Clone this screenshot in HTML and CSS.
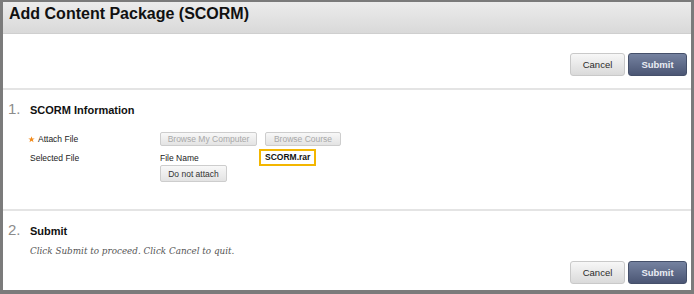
FILE: index.html
```html
<!DOCTYPE html>
<html lang="en">
  <head>
    <meta charset="UTF-8" />
    <title>Add Content Package (SCORM)</title>
    <link rel="stylesheet" href="styles.css">
  </head>
  <body>
    <div class="frame">
      <div class="page-header">
        <h1>Add Content Package (SCORM)</h1>
      </div>

      <div class="action-bar">
        <button type="button" class="btn btn-cancel">Cancel</button>
        <button type="submit" class="btn btn-submit">Submit</button>
      </div>

      <div class="step step-info">
        <h2 class="step-title"><span class="step-num">1.</span>SCORM Information</h2>

        <div class="field-row row-attach">
          <div class="field-label">
            <svg class="req" viewBox="0 0 10 10" width="7" height="7">
              <path d="M5 0.3 L6.1 3.4 L9.6 3.4 L6.8 5.4 L7.9 9 L5 6.8 L2.1 9 L3.2 5.4 L0.4 3.4 L3.9 3.4 Z" fill="#f28a1a" />
            </svg>
            Attach File
          </div>
          <div class="field-value">
            <button type="button" class="btn-small btn-browse" disabled>Browse My Computer</button>
            <button type="button" class="btn-small btn-course" disabled>Browse Course</button>
          </div>
        </div>

        <div class="field-row row-selected">
          <div class="field-label">Selected File</div>
          <div class="field-value stack">
            <div class="file-line">
              <span class="file-caption">File Name</span>
              <span class="file-name">SCORM.rar</span>
            </div>
            <button type="button" class="btn-small btn-detach">Do not attach</button>
          </div>
        </div>
      </div>

      <div class="step step-submit">
        <h2 class="step-title"><span class="step-num">2.</span>Submit</h2>
        <p class="hint">Click Submit to proceed. Click Cancel to quit.</p>
        <div class="bottom-bar">
          <button type="button" class="btn btn-cancel">Cancel</button>
          <button type="submit" class="btn btn-submit">Submit</button>
        </div>
      </div>
    </div>
  </body>
</html>
```

FILE: styles.css
```css
* {
  margin: 0;
  padding: 0;
  box-sizing: border-box;
}

body {
  font-family: 'Liberation Sans', Arial, sans-serif;
  background: #7d7d7d;
}

.frame {
  width: 694px;
  height: 294px;
  border-style: solid;
  border-color: #7b7b7b;
  border-width: 2px 3px 4px 3px;
  background: #fff;
  display: flex;
  flex-direction: column;
}

/* title strip */
.page-header {
  height: 32px;
  padding: 2px 6px 0;
  background: linear-gradient(#ececec, #d9d9d9);
  border-bottom: 1px solid #cfcfcf;
}

.page-header h1 {
  font-size: 16px;
  line-height: 19px;
  font-weight: bold;
  color: #111;
}

.action-bar {
  height: 56px;
  display: flex;
  justify-content: flex-end;
  gap: 3px;
  padding: 19px 4px 0 0;
  border-bottom: 2px solid #e4e4e4;
}

.btn {
  height: 23px;
  border-radius: 3px;
  font-family: 'Liberation Sans', Arial, sans-serif;
  font-size: 9.5px;
  cursor: pointer;
}

.btn-cancel {
  width: 55px;
  color: #2a2a2a;
  border: 1px solid #c9c9c9;
  background: linear-gradient(#f7f7f7, #dadada);
}

.btn-submit {
  width: 59px;
  font-weight: bold;
  color: #e9ecf3;
  border: 1px solid #45506a;
  background: linear-gradient(#7582a0, #4b5674);
}

/* numbered steps */
.step {
  padding: 0 0 0 5px;
}

.step-info {
  height: 121px;
  padding-top: 12px;
  border-bottom: 2px solid #e4e4e4;
}

.step-title {
  display: flex;
  align-items: baseline;
  font-size: 11px;
  font-weight: bold;
  color: #111;
  line-height: 14px;
  margin-bottom: 15px;
}

.step-num {
  width: 22px;
  font-size: 15px;
  font-weight: normal;
  color: #8c8c8c;
}

.field-row {
  display: flex;
  font-size: 8.5px;
  color: #222;
}

.field-label {
  width: 152px;
  padding-left: 22px;
  display: flex;
  align-items: center;
  gap: 3px;
  height: 14px;
}

.row-attach .field-label {
  padding-left: 20px;
}

.field-value {
  display: flex;
  gap: 8px;
}

.stack {
  flex-direction: column;
  gap: 0;
}

.row-selected {
  margin-top: 3px;
}

.row-selected .field-label {
  height: 17px;
}

.btn-small {
  height: 14px;
  padding: 0;
  white-space: nowrap;
  font-family: 'Liberation Sans', Arial, sans-serif;
  font-size: 8.5px;
  color: #a8a8a8;
  border: 1px solid #cdcdcd;
  border-radius: 2px;
  background: linear-gradient(#f8f8f8, #e3e3e3);
}

.btn-browse {
  width: 97px;
}

.btn-course {
  width: 76px;
}

.file-line {
  display: flex;
  align-items: center;
  height: 17px;
}

.file-caption {
  width: 99px;
}

.file-name {
  font-weight: bold;
  color: #111;
  border: 2px solid #f3b600;
  padding: 0 4px;
  line-height: 13px;
}

.btn-detach {
  width: 67px;
  height: 17px;
  color: #333;
  margin-top: -1px;
  align-self: flex-start;
}

.step-submit {
  flex: 1;
  padding-top: 12px;
  display: flex;
  flex-direction: column;
}

.step-submit .step-title {
  margin-bottom: 8px;
}

.hint {
  padding-left: 22px;
  font-family: 'DejaVu Serif', Georgia, serif;
  font-style: italic;
  font-size: 8.8px;
  color: #555;
}

.bottom-bar {
  margin-top: auto;
  margin-bottom: 6px;
  display: flex;
  justify-content: flex-end;
  gap: 3px;
  padding-right: 4px;
}
```
